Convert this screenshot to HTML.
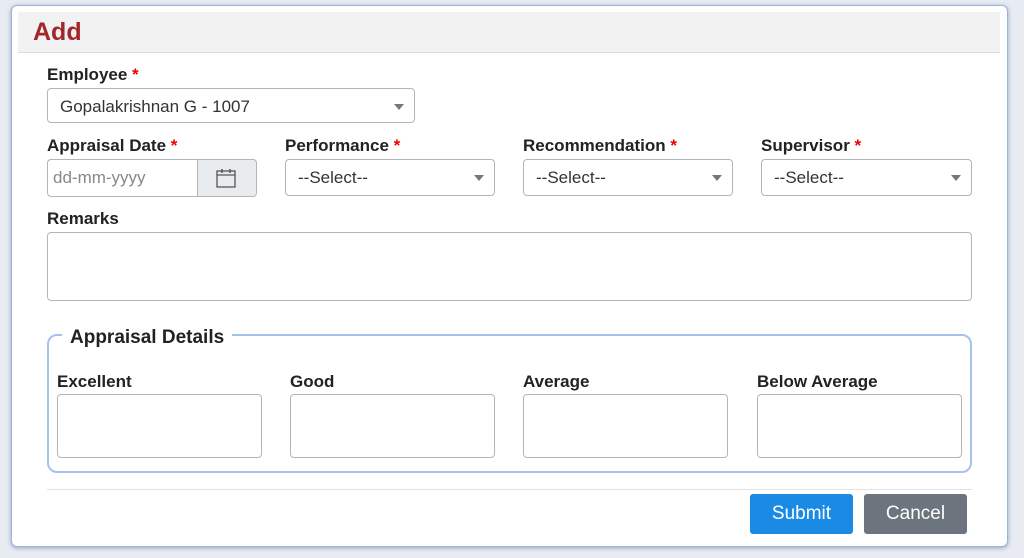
<!DOCTYPE html><html><head><style>
body{margin:0;width:1024px;height:558px;background:#e8ecf2;font-family:"Liberation Sans",sans-serif;position:relative;overflow:hidden}
.a{position:absolute;box-sizing:border-box}
.card{left:11px;top:5px;width:997px;height:542px;background:#fff;border:1px solid #9db5dc;border-radius:6px;box-shadow:0 1px 4px rgba(60,90,150,.5)}
.hd{left:18px;top:12px;width:982px;height:41px;background:#f2f2f2;border-bottom:1px solid #ddd}
.lb{font-weight:bold;font-size:17px;color:#222}
.lb i{color:#e00;font-style:normal}
.in{border:1px solid #b5b5b5;border-radius:4px;background:#fff}
.sel{font-size:17px;color:#333;padding:8px 12px}
.sel:after{content:"";position:absolute;right:10px;top:15px;border-left:5px solid transparent;border-right:5px solid transparent;border-top:6px solid #777}
.btn{color:#fff;font-size:19px;text-align:center;line-height:40px;border-radius:3px}
</style></head><body>
<div class="a card"></div>
<div class="a hd"></div>
<div class="a" style="left:33px;top:18px;font-size:25px;font-weight:bold;color:#a3262a">Add</div>
<div class="a lb" style="left:47px;top:65px">Employee <i>*</i></div>
<div class="a in sel" style="left:47px;top:88px;width:368px;height:35px">Gopalakrishnan G - 1007</div>
<div class="a lb" style="left:47px;top:136px">Appraisal Date <i>*</i></div>
<div class="a lb" style="left:285px;top:136px">Performance <i>*</i></div>
<div class="a lb" style="left:523px;top:136px">Recommendation <i>*</i></div>
<div class="a lb" style="left:761px;top:136px">Supervisor <i>*</i></div>
<div class="a in" style="left:47px;top:159px;width:210px;height:38px;background:#e9ecef"></div>
<div class="a" style="left:48px;top:160px;width:150px;height:36px;background:#fff;border-right:1px solid #b5b5b5;border-radius:4px 0 0 4px;font-size:17px;color:#888;padding:8px 0 0 5px">dd-mm-yyyy</div>
<svg class="a" style="left:215px;top:167px" width="22" height="22" viewBox="0 0 22 22"><rect x="2" y="4" width="18" height="16" fill="none" stroke="#555" stroke-width="1.3"/><line x1="2" y1="8" x2="20" y2="8" stroke="#555" stroke-width="1.3"/><line x1="7" y1="2" x2="7" y2="6" stroke="#555" stroke-width="1.5"/><line x1="15" y1="2" x2="15" y2="6" stroke="#555" stroke-width="1.5"/></svg>
<div class="a in sel" style="left:285px;top:159px;width:210px;height:37px">--Select--</div>
<div class="a in sel" style="left:523px;top:159px;width:210px;height:37px">--Select--</div>
<div class="a in sel" style="left:761px;top:159px;width:211px;height:37px">--Select--</div>
<div class="a lb" style="left:47px;top:209px">Remarks</div>
<div class="a in" style="left:47px;top:232px;width:925px;height:69px"></div>
<div class="a" style="left:47px;top:334px;width:925px;height:139px;border:2px solid #a8c0ec;border-radius:10px"></div>
<div class="a lb" style="left:62px;top:327px;background:#fff;padding:0 8px;font-size:19px">Appraisal Details</div>
<div class="a lb" style="left:57px;top:372px">Excellent</div>
<div class="a lb" style="left:290px;top:372px">Good</div>
<div class="a lb" style="left:523px;top:372px">Average</div>
<div class="a lb" style="left:757px;top:372px">Below Average</div>
<div class="a in" style="left:57px;top:394px;width:205px;height:64px"></div>
<div class="a in" style="left:290px;top:394px;width:205px;height:64px"></div>
<div class="a in" style="left:523px;top:394px;width:205px;height:64px"></div>
<div class="a in" style="left:757px;top:394px;width:205px;height:64px"></div>
<div class="a" style="left:47px;top:489px;width:925px;height:1px;background:#e3e3e3"></div>
<div class="a btn" style="left:750px;top:494px;width:103px;height:40px;background:#1a8ae5">Submit</div>
<div class="a btn" style="left:864px;top:494px;width:103px;height:40px;background:#6c757d">Cancel</div>
</body></html>
